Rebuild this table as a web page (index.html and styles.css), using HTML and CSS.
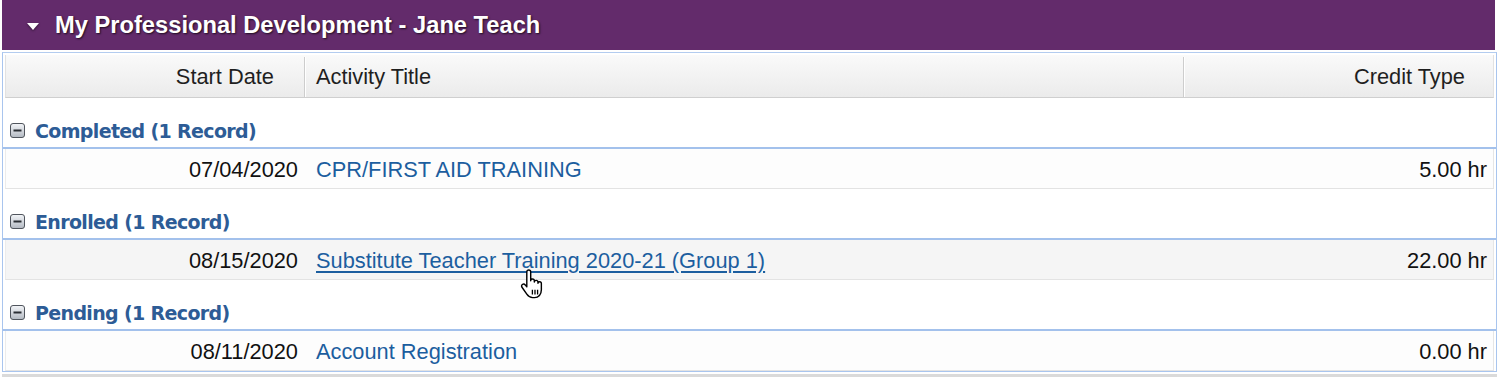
FILE: index.html
```html
<!DOCTYPE html>
<html>
<head>
<meta charset="utf-8">
<link rel="stylesheet" href="styles.css">
</head>
<body>
<div class="panel">
  <div class="panel-head">
    <span class="caret"></span>
    <h1 class="panel-title">My Professional Development - Jane Teach</h1>
  </div>
  <div class="grid-box">
    <div class="thead">
      <div class="th th-date">Start Date</div>
      <div class="th th-title">Activity Title</div>
      <div class="th th-credit">Credit Type</div>
    </div>

    <div class="group">
      <div class="group-head">
        <svg class="collapse" width="15" height="15" viewBox="0 0 15 15"><defs><linearGradient id="g1" x1="0" y1="0" x2="0" y2="1"><stop offset="0" stop-color="#f4f6f9"/><stop offset="1" stop-color="#b3b9c2"/></linearGradient></defs><rect x="0.5" y="0.5" width="14" height="14" rx="2.5" fill="url(#g1)" stroke="#50555d"/><rect x="3.5" y="6.5" width="8" height="2" fill="#2b2f35"/></svg>
        <span class="group-label">Completed (1 Record)</span>
      </div>
      <div class="row">
        <div class="td td-date">07/04/2020</div>
        <div class="td td-title"><a class="link" href="#">CPR/FIRST AID TRAINING</a></div>
        <div class="td td-credit">5.00 hr</div>
      </div>
    </div>

    <div class="group">
      <div class="group-head">
        <svg class="collapse" width="15" height="15" viewBox="0 0 15 15"><defs><linearGradient id="g2" x1="0" y1="0" x2="0" y2="1"><stop offset="0" stop-color="#f4f6f9"/><stop offset="1" stop-color="#b3b9c2"/></linearGradient></defs><rect x="0.5" y="0.5" width="14" height="14" rx="2.5" fill="url(#g2)" stroke="#50555d"/><rect x="3.5" y="6.5" width="8" height="2" fill="#2b2f35"/></svg>
        <span class="group-label">Enrolled (1 Record)</span>
      </div>
      <div class="row row-alt">
        <div class="td td-date">08/15/2020</div>
        <div class="td td-title"><a class="link link-hover" href="#">Substitute Teacher Training 2020-21 (Group 1)</a></div>
        <div class="td td-credit">22.00 hr</div>
      </div>
    </div>

    <div class="group">
      <div class="group-head">
        <svg class="collapse" width="15" height="15" viewBox="0 0 15 15"><defs><linearGradient id="g3" x1="0" y1="0" x2="0" y2="1"><stop offset="0" stop-color="#f4f6f9"/><stop offset="1" stop-color="#b3b9c2"/></linearGradient></defs><rect x="0.5" y="0.5" width="14" height="14" rx="2.5" fill="url(#g3)" stroke="#50555d"/><rect x="3.5" y="6.5" width="8" height="2" fill="#2b2f35"/></svg>
        <span class="group-label">Pending (1 Record)</span>
      </div>
      <div class="row">
        <div class="td td-date">08/11/2020</div>
        <div class="td td-title"><a class="link" href="#">Account Registration</a></div>
        <div class="td td-credit">0.00 hr</div>
      </div>
    </div>
  </div>
  <div class="footer-bar"></div>

  <svg class="cursor" width="26" height="30" viewBox="0 0 20 23"><path d="M6 2.2C6 1.3 6.7 0.7 7.5 0.7S9 1.3 9 2.2V9C9 8.2 9.6 7.6 10.4 7.6S11.8 8.2 11.8 9V10C11.8 9.2 12.4 8.7 13.2 8.7S14.6 9.3 14.6 10.1V11C14.6 10.3 15.2 9.8 15.9 9.8S17.2 10.4 17.2 11.2V16C17.2 19.5 15 22 12 22H10.5C8.5 22 7.2 21 6 19.3L2.3 14C1.8 13.3 1.9 12.4 2.6 11.9S4.2 11.5 4.8 12.2L6 13.7Z" fill="#fff" stroke="#000" stroke-width="1.1" stroke-linejoin="round"/><path d="M10.3 16V19.6M12.3 16V19.6M14.3 16V19.6" stroke="#000" stroke-width="1"/></svg>
</div>
</body>
</html>
```

FILE: styles.css
```css
html, body {
  margin: 0;
  padding: 0;
  background: #fff;
}

body {
  font-family: "Liberation Sans", Arial, sans-serif;
  color: #111;
}

.panel {
  position: relative;
  width: 1495px;
  margin-left: 2px;
}

.panel-head {
  height: 50px;
  width: 1493px;
  background: #632b6b;
  display: flex;
  align-items: center;
  box-sizing: border-box;
  padding-left: 25px;
}

.caret {
  width: 0;
  height: 0;
  border-left: 6px solid transparent;
  border-right: 6px solid transparent;
  border-top: 7px solid #fff;
  margin-top: 3px;
  margin-right: 16px;
  filter: drop-shadow(0 1px 1px rgba(0,0,0,0.5));
}

.panel-title {
  margin: 0;
  font-size: 23.7px;
  font-weight: bold;
  color: #fff;
  line-height: 28px;
  text-shadow: 1px 1px 2px rgba(0,0,0,0.7);
}

.grid-box {
  margin-top: 2px;
  border: 1px solid #a9c5ee;
  border-top-color: #b3ccef;
}

.thead {
  margin: 2px 2px 0 2px;
  display: grid;
  grid-template-columns: 299px 879px 311px;
  height: 43px;
  box-sizing: border-box;
  padding-top: 2px;
  background: linear-gradient(#fafafa, #ebebeb);
  border-bottom: 1px solid #cfcfcf;
  border-left: 1px solid #e2e2e2;
  border-right: 1px solid #e2e2e2;
}

.th {
  display: flex;
  align-items: center;
  font-size: 21.8px;
  color: #1f1f1f;
  box-sizing: border-box;
}

.th-date {
  justify-content: flex-end;
  padding-right: 30px;
  border-right: 1px solid #cdcdcd;
  box-shadow: 1px 0 0 #fff;
}

.th-title {
  padding-left: 11px;
  border-right: 1px solid #cdcdcd;
  box-shadow: 1px 0 0 #fff;
}

.th-credit {
  justify-content: flex-end;
  padding-right: 30px;
}

.group-head {
  height: 51px;
  box-sizing: border-box;
  display: flex;
  align-items: flex-end;
  padding: 0 0 5px 7px;
  border-bottom: 2px solid #a3c1ec;
}

.collapse {
  display: block;
  margin-bottom: 4px;
  margin-right: 10px;
}

.group-label {
  font-family: "DejaVu Sans", Verdana, sans-serif;
  font-weight: bold;
  font-size: 19px;
  letter-spacing: -0.65px;
  line-height: 22px;
  color: #2d5c96;
}

.row {
  margin: 0 2px;
  display: grid;
  grid-template-columns: 299px 879px 311px;
  height: 40px;
  box-sizing: border-box;
  padding-top: 3px;
  border-bottom: 1px solid #e3e3e3;
  border-left: 1px solid #ececec;
  border-right: 1px solid #e6e6e6;
  background: #fdfdfd;
}

.row-alt {
  background: #f5f5f5;
}

.td {
  display: flex;
  align-items: center;
  font-size: 21.8px;
  color: #111;
  box-sizing: border-box;
}

.td-date {
  justify-content: flex-end;
  padding-right: 7px;
}

.td-title {
  padding-left: 11px;
}

.td-credit {
  justify-content: flex-end;
  padding-right: 8px;
}

.link {
  color: #1c5e9f;
  text-decoration: none;
}

.link-hover {
  text-decoration: underline;
  text-underline-offset: 3px;
  text-decoration-thickness: 2px;
}

.footer-bar {
  margin-top: 2px;
  height: 3px;
  background: #dadada;
}

.cursor {
  position: absolute;
  left: 517px;
  top: 269px;
}
```
